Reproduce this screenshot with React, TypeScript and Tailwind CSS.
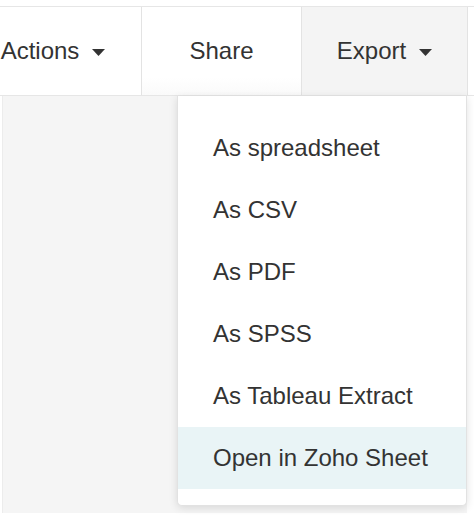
import React from "react";

function Caret() {
  return (
    <svg width="13" height="7" viewBox="0 0 13 7" className="ml-[13px] mt-[2px]">
      <polygon points="0,0 13,0 6.5,7" fill="#333333" />
    </svg>
  );
}

export default function App() {
  const items = [
    "As spreadsheet",
    "As CSV",
    "As PDF",
    "As SPSS",
    "As Tableau Extract",
    "Open in Zoho Sheet",
  ];
  return (
    <div
      className="relative w-[474px] h-[515px] bg-white overflow-hidden flex flex-col text-[#333333]"
      style={{ fontFamily: '"Liberation Sans", Arial, sans-serif' }}
    >
      <div className="h-[6px] shrink-0" />
      <div className="h-[90px] shrink-0 flex border-t border-b border-[#e6e6e6] -ml-[35px]">
        <div className="w-[177px] shrink-0 flex items-center justify-center border-r border-[#e3e3e3] text-[24px] bg-white">
          <span>Actions</span>
          <Caret />
        </div>
        <div className="w-[160px] shrink-0 flex items-center justify-center border-r border-[#e3e3e3] text-[24px] bg-gradient-to-b from-white from-80% to-[#fafafa]">
          <span>Share</span>
        </div>
        <div className="w-[166px] shrink-0 flex items-center justify-center border-r border-[#e3e3e3] text-[24px] bg-[#f4f4f4]">
          <span>Export</span>
          <Caret />
        </div>
        <div className="flex-1 bg-white" />
      </div>
      <div className="flex-1 flex">
        <div className="w-[2px] bg-white" />
        <div className="w-[465px] h-[417px] bg-[#f5f5f5] border-l border-[#ececec]" />
        <div className="flex-1 bg-white" />
      </div>
      <div className="absolute left-[177px] top-[96px] w-[290px] h-[410px] bg-white rounded-b-[5px] border border-t-0 border-[#e2e2e2] shadow-[0_2px_8px_rgba(0,0,0,0.12)] pt-[21px]">
        {items.map((t, i) => (
          <div
            key={t}
            className={
              "h-[62px] flex items-center pl-[35px] text-[24px] " +
              (i === items.length - 1 ? "bg-[#e9f4f6]" : "")
            }
          >
            {t}
          </div>
        ))}
      </div>
    </div>
  );
}
